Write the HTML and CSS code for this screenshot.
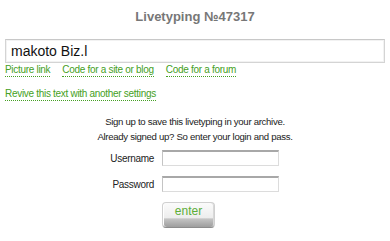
FILE: index.html
```html
<!DOCTYPE html>
<html lang="en">
<head>
  <meta charset="UTF-8"/>
  <title>Livetyping №47317</title>
  <link rel="stylesheet" href="styles.css">
</head>
<body>
  <div class="page">
    <h1>Livetyping №47317</h1>

    <div class="text-box">makoto Biz.l</div>
    <div class="links">
      <a href="#">Picture link</a>
      <a href="#">Code for a site or blog</a>
      <a href="#">Code for a forum</a>
    </div>
    <div class="links revive">
      <a href="#">Revive this text with another settings</a>
    </div>

    <p class="signup">Sign up to save this livetyping in your archive.<br>Already signed up? So enter your login and pass.</p>

    <form class="login">
      <div class="field">
        <label for="user">Username</label>
        <input type="text" id="user"/>
      </div>
      <div class="field">
        <label for="pass">Password</label>
        <input type="password" id="pass"/>
      </div>
      <div class="field">
        <span class="spacer"></span>
        <button type="button" class="enter">enter</button>
      </div>
    </form>
  </div>
</body>
</html>
```

FILE: styles.css
```css
* { box-sizing: border-box; }
body {
  margin: 0;
  background: #fff;
  font-family: 'Liberation Sans', Arial, sans-serif;
  font-size: 10px;
  letter-spacing: -0.3px;
  color: #222;
}
.page {
  padding: 8px 5px 0;
}
h1 {
  margin: 0 0 13px;
  text-align: center;
  font-size: 13px;
  font-weight: bold;
  letter-spacing: 0;
  color: #777;
  line-height: 18px;
}
.text-box {
  height: 24px;
  padding: 3px 5px;
  border: 1px solid #d4d4d4;
  border-top-color: #c8c8c8;
  box-shadow: inset 0 0 0 1px #f2f2f2;
  font-size: 14px;
  letter-spacing: 0;
  line-height: 17px;
  color: #111;
}
.links {
  display: flex;
  gap: 12px;
  margin-top: 1px;
}
.links a {
  color: #45a024;
  text-decoration: none;
  border-bottom: 1px dotted #45a024;
  line-height: 12px;
}
.revive {
  margin-top: 11px;
}
.signup {
  margin: 13px 0 6px;
  text-align: center;
  font-size: 9.6px;
  line-height: 15px;
  color: #222;
}
.login {
  display: flex;
  flex-direction: column;
  gap: 10px;
}
.field {
  display: flex;
  align-items: center;
  gap: 8px;
}
.field label, .spacer {
  width: 149px;
  text-align: right;
  font-size: 10px;
}
.field input {
  width: 117px;
  height: 16px;
  border: 1px solid #dcdcdc;
  border-top: 2px solid #a8a8a8;
  border-left-color: #c4c4c4;
  padding: 0 3px;
  font: inherit;
}
.enter {
  width: 53px;
  height: 26px;
  margin-top: 0;
  border: 1px solid #d0d0d0;
  border-bottom-color: #8c8c8c;
  border-radius: 4px;
  background: linear-gradient(#fbfbfb, #ededed 62%, #c4c4c4 66%, #9e9e9e);
  box-shadow: inset 1px 0 0 #fff, inset -1px 0 0 #d8d8d8;
  font-family: 'Liberation Sans', Arial, sans-serif;
  font-size: 12px;
  letter-spacing: 0;
  color: #5cae38;
  padding: 0 0 8px;
  line-height: 14px;
}
```
